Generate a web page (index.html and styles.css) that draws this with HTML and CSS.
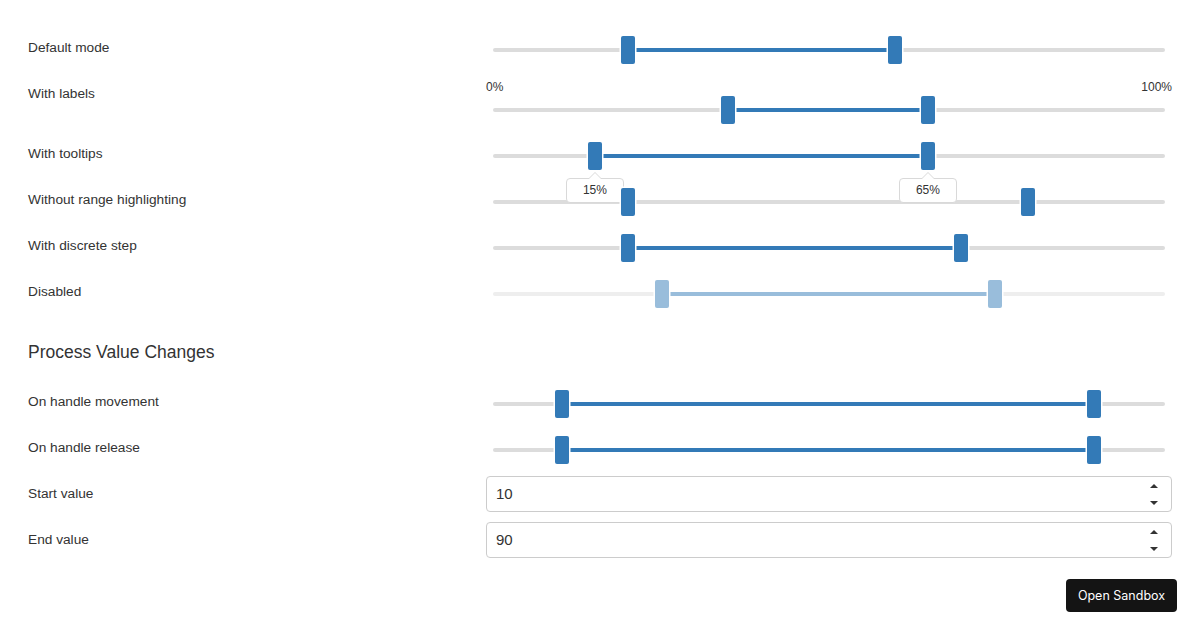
FILE: index.html
```html
<!DOCTYPE html>
<html>
<head>
<meta charset="utf-8">
<link rel="stylesheet" href="styles.css">
</head>
<body>
<div class="page">
  <div class="row">
    <div class="label">Default mode</div>
    <div class="control">
      <div class="slider">
        <div class="track">
          <div class="range" style="--a:20;--b:60"></div>
          <div class="handle" style="--v:20"></div>
          <div class="handle" style="--v:60"></div>
        </div>
      </div>
    </div>
  </div>

  <div class="row row-labels">
    <div class="label">With labels</div>
    <div class="control">
      <div class="ticks"><span>0%</span><span>100%</span></div>
      <div class="slider slider-short">
        <div class="track">
          <div class="range" style="--a:35;--b:65"></div>
          <div class="handle" style="--v:35"></div>
          <div class="handle" style="--v:65"></div>
        </div>
      </div>
    </div>
  </div>

  <div class="row">
    <div class="label">With tooltips</div>
    <div class="control">
      <div class="slider">
        <div class="track">
          <div class="range" style="--a:15;--b:65"></div>
          <div class="handle" style="--v:15"><div class="tip">15%</div></div>
          <div class="handle" style="--v:65"><div class="tip">65%</div></div>
        </div>
      </div>
    </div>
  </div>

  <div class="row">
    <div class="label">Without range highlighting</div>
    <div class="control">
      <div class="slider">
        <div class="track">
          <div class="handle" style="--v:20"></div>
          <div class="handle" style="--v:80"></div>
        </div>
      </div>
    </div>
  </div>

  <div class="row">
    <div class="label">With discrete step</div>
    <div class="control">
      <div class="slider">
        <div class="track">
          <div class="range" style="--a:20;--b:70"></div>
          <div class="handle" style="--v:20"></div>
          <div class="handle" style="--v:70"></div>
        </div>
      </div>
    </div>
  </div>

  <div class="row">
    <div class="label">Disabled</div>
    <div class="control">
      <div class="slider disabled">
        <div class="track">
          <div class="range" style="--a:25;--b:75"></div>
          <div class="handle" style="--v:25"></div>
          <div class="handle" style="--v:75"></div>
        </div>
      </div>
    </div>
  </div>

  <h2 class="heading">Process Value Changes</h2>

  <div class="row">
    <div class="label">On handle movement</div>
    <div class="control">
      <div class="slider">
        <div class="track">
          <div class="range" style="--a:10;--b:90"></div>
          <div class="handle" style="--v:10"></div>
          <div class="handle" style="--v:90"></div>
        </div>
      </div>
    </div>
  </div>

  <div class="row">
    <div class="label">On handle release</div>
    <div class="control">
      <div class="slider">
        <div class="track">
          <div class="range" style="--a:10;--b:90"></div>
          <div class="handle" style="--v:10"></div>
          <div class="handle" style="--v:90"></div>
        </div>
      </div>
    </div>
  </div>

  <div class="row">
    <div class="label">Start value</div>
    <div class="control control-input">
      <div class="numeric">
        <span class="value">10</span>
        <span class="spin"><span class="up"></span><span class="down"></span></span>
      </div>
    </div>
  </div>

  <div class="row">
    <div class="label">End value</div>
    <div class="control control-input">
      <div class="numeric">
        <span class="value">90</span>
        <span class="spin"><span class="up"></span><span class="down"></span></span>
      </div>
    </div>
  </div>
</div>
<button class="sandbox">Open Sandbox</button>
</body>
</html>
```

FILE: styles.css
```css
html, body {
  margin: 0;
  padding: 0;
  background: #fff;
}

body {
  font-family: "Liberation Sans", Arial, sans-serif;
  color: #333;
  font-size: 14px;
}

.page {
  padding: 24px 28px 0 28px;
}

.row {
  display: grid;
  grid-template-columns: 458px 1fr;
  height: 46px;
}

.row-labels {
  height: 60px;
}

.label {
  line-height: 46px;
  padding-top: 1px;
  font-size: 13.7px;
  white-space: nowrap;
}

.control {
  display: flex;
  flex-direction: column;
}

.slider {
  height: 46px;
  padding: 0 7px;
  position: relative;
}

.slider-short {
  height: 36px;
}

.track {
  position: relative;
  margin-top: 24px;
  height: 4px;
  border-radius: 2px;
  background: #dcdcdc;
}

.slider-short .track {
  margin-top: 14px;
}

.range {
  position: absolute;
  top: 0;
  bottom: 0;
  left: calc(2px + (100% - 6px) * var(--a) / 100);
  width: calc((100% - 6px) * (var(--b) - var(--a)) / 100);
  background: #337ab7;
}

.handle {
  position: absolute;
  top: 50%;
  left: calc(2px + (100% - 6px) * var(--v) / 100);
  width: 14px;
  height: 28px;
  margin-left: -7px;
  margin-top: -14px;
  background: #337ab7;
  border-radius: 2px;
  box-shadow: 0 0 0 1.5px #fff;
  z-index: 1;
}

.disabled .track {
  background: #eeeeee;
}

.disabled .range {
  background: #99bddb;
}

.disabled .handle {
  background: #99bddb;
}

.ticks {
  display: flex;
  justify-content: space-between;
  font-size: 12px;
  line-height: 14px;
  margin-top: 10px;
}

.tip {
  position: absolute;
  top: 36px;
  left: 50%;
  width: 58px;
  margin-left: -29px;
  height: 25px;
  box-sizing: border-box;
  background: #fff;
  border: 1px solid #d9d9d9;
  border-radius: 4px;
  font-size: 12px;
  line-height: 23px;
  text-align: center;
  color: #333;
}

.tip::before {
  content: "";
  position: absolute;
  top: -7px;
  left: 50%;
  margin-left: -7px;
  border-left: 7px solid transparent;
  border-right: 7px solid transparent;
  border-bottom: 7px solid #d9d9d9;
}

.tip::after {
  content: "";
  position: absolute;
  top: -6px;
  left: 50%;
  margin-left: -6px;
  border-left: 6px solid transparent;
  border-right: 6px solid transparent;
  border-bottom: 6px solid #fff;
}

.heading {
  margin: 0;
  font-size: 17.5px;
  font-weight: normal;
  line-height: 26px;
  padding: 25px 0 13px 0;
  color: #333;
}

.control-input {
  justify-content: center;
}

.numeric {
  height: 36px;
  box-sizing: border-box;
  border: 1px solid #ccc;
  border-radius: 4px;
  display: flex;
  align-items: center;
  justify-content: space-between;
  padding: 0 13px 0 9px;
  font-size: 15px;
}

.spin {
  display: flex;
  flex-direction: column;
  gap: 13px;
  padding-top: 1px;
}

.up {
  width: 0;
  height: 0;
  border-left: 4px solid transparent;
  border-right: 4px solid transparent;
  border-bottom: 4px solid #333;
}

.down {
  width: 0;
  height: 0;
  border-left: 4px solid transparent;
  border-right: 4px solid transparent;
  border-top: 4px solid #333;
}

.sandbox {
  position: fixed;
  right: 23px;
  bottom: 18px;
  width: 111px;
  height: 33px;
  border: none;
  border-radius: 4px;
  background: #141414;
  color: #fff;
  font-family: Inter, "Liberation Sans", sans-serif;
  font-size: 12.5px;
  padding: 0;
}
```
